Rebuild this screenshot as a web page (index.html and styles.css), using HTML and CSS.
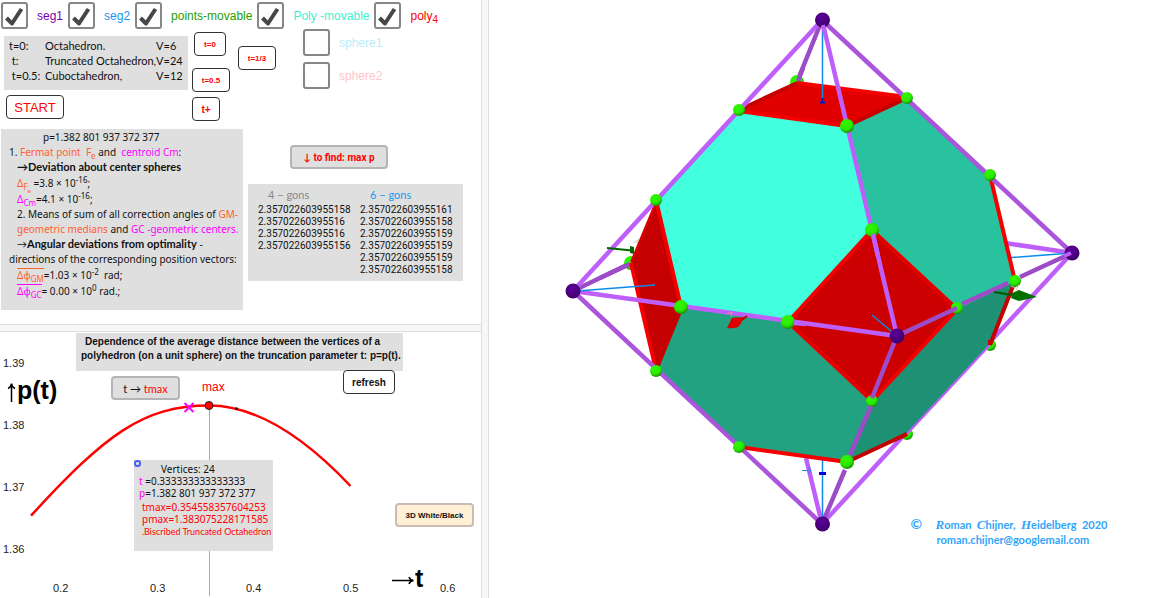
FILE: index.html
```html
<!DOCTYPE html>
<html lang="en">
<head>
<meta charset="utf-8">
<title>Truncated Octahedron</title>
<link rel="stylesheet" href="styles.css">
</head>
<body>
<main class="app">
  <div class="left">
    <section class="controls">
      <div class="toggles">
        <label class="toggle seg1"><input type="checkbox" checked>seg1</label>
        <label class="toggle seg2"><input type="checkbox" checked>seg2</label>
        <label class="toggle points"><input type="checkbox" checked>points-movable</label>
        <label class="toggle polym"><input type="checkbox" checked>Poly -movable</label>
        <label class="toggle poly4"><input type="checkbox" checked><span>poly<sub>4</sub></span></label>
      </div>
      <div class="setup">
        <div class="setup-main">
          <div class="legend">
            <span>t=0:</span><span>Octahedron.</span><span>V=6</span>
            <span>&nbsp;t:</span><span>Truncated Octahedron,</span><span>V=24</span>
            <span>&nbsp;t=0.5:</span><span>Cuboctahedron,</span><span>V=12</span>
          </div>
          <button class="btn start">START</button>
        </div>
        <div class="steps">
          <button class="btn small">t=0</button>
          <button class="btn small mid">t=0.5</button>
          <button class="btn small plus">t+</button>
        </div>
        <button class="btn small third">t=1/3</button>
        <div class="spheres">
          <label class="toggle sphere1"><input type="checkbox">sphere1</label>
          <label class="toggle sphere2"><input type="checkbox">sphere2</label>
        </div>
      </div>
      <div class="results">
        <div class="stats">
          <p class="center">p=1.382 801 937 372 377</p>
          <p>1. <span class="orange">Fermat point &nbsp;F<sub>e</sub></span> and &nbsp;<span class="pink">centroid Cm</span>:</p>
          <p class="in"><b>→Deviation about center spheres</b></p>
          <p class="in tall"><span class="orange">Δ<sub>F<small>e</small></sub></span> =3.8 × 10<sup>-16</sup>;</p>
          <p class="in tall"><span class="pink">Δ<sub>Cm</sub></span>=4.1 × 10<sup>-16</sup>;</p>
          <p class="in">2. Means of sum of all correction angles of <span class="orange">GM-</span></p>
          <p class="in"><span class="orange">geometric medians</span> and <span class="pink">GC -geometric centers.</span></p>
          <p class="in">→<b>Angular deviations from optimality</b> -</p>
          <p>directions of the corresponding position vectors:</p>
          <p class="in tall"><span class="orange over">Δφ<sub>GM</sub></span>=1.03 × 10<sup>-2</sup> &nbsp;rad;</p>
          <p class="in tall"><span class="pink over">Δφ<sub>GC</sub></span>= 0.00 × 10<sup>0</sup> rad.;</p>
        </div>
        <div class="gons-side">
          <button class="btn grey find">↓ to find: max p</button>
          <div class="gons-box">
            <table class="gons">
              <thead><tr><th class="four">4 − gons</th><th class="six">6 − gons</th></tr></thead>
              <tbody>
                <tr><td>2.357022603955158</td><td>2.357022603955161</td></tr>
                <tr><td>2.35702260395516</td><td>2.357022603955158</td></tr>
                <tr><td>2.35702260395516</td><td>2.357022603955159</td></tr>
                <tr><td>2.357022603955156</td><td>2.357022603955159</td></tr>
                <tr><td></td><td>2.357022603955159</td></tr>
                <tr><td></td><td>2.357022603955158</td></tr>
              </tbody>
            </table>
          </div>
        </div>
      </div>
    </section>
    <section class="graph">
      <svg class="plot" viewBox="0 332 481 266" preserveAspectRatio="xMinYMin meet">
        <g class="ticks">
          <text x="3" y="367">1.39</text><text x="3" y="429">1.38</text><text x="3" y="491">1.37</text><text x="3" y="553">1.36</text>
          <text x="53" y="592">0.2</text><text x="150" y="592">0.3</text><text x="246" y="592">0.4</text><text x="343" y="592">0.5</text><text x="440" y="592">0.6</text>
        </g>
        <path class="axis-arrow" d="M11.500 402V383.500M8 388.500q3-1 3.500-5q.5 4 3.500 5"/>
        <text class="axis" x="17" y="399">p(t)</text>
        <path class="axis-arrow" d="M392 580.500H413.500M409 577q1 3 4.500 3.500q-3.500.5-4.500 3.500"/>
        <text class="axis" x="415" y="587">t</text>
        <path d="M209.500 405V596" stroke="#aaa" stroke-width="1"/>
        <path class="curve" d="M31 515.700C105 435 143 405.500 209 405.500C258 405.500 308 441 350.500 486"/>
        <path d="M184.500 403l9 9m0-9l-9 9" stroke="#f0f" stroke-width="2"/>
        <circle cx="236.500" cy="408.500" r="1.300"/>
        <circle cx="209" cy="405.500" r="4" fill="red" stroke="#222"/>
        <text class="max" x="202" y="391">max</text>
      </svg>
      <div class="graph-title"><p class="lead">Dependence of the average distance between the vertices of a</p><p>polyhedron (on a unit sphere) on the truncation parameter t: p=p(t).</p></div>
      <button class="btn grey tmax">t → <span class="red">tmax</span></button>
      <button class="btn refresh">refresh</button>
      <div class="values">
        <p class="vert">Vertices: 24</p>
        <p><span class="pink">t</span> =0.333333333333333</p>
        <p><span class="pink">p</span>=1.382 801 937 372 377</p>
        <p class="red first">tmax=0.354558357604253</p>
        <p class="red">pmax=1.383075228171585</p>
        <p class="red note">.Biscribed Truncated Octahedron</p>
      </div>
      <button class="btn theme">3D White/Black</button>
    </section>
  </div>
  <div class="divider"></div>
  <section class="view3d">
    <svg class="solid" viewBox="489 0 669 598" preserveAspectRatio="xMinYMin meet">
      <g class="rod">
        <path d="M822 524L806 458"/><path d="M1072 253L1005 243"/>
        <path d="M1072 253L822 524"/>
        <path class="dim" d="M822 20L797 82M573 291L631 263"/>
      </g>
      <path d="M1072 253L1005 258M822.500 524V459" class="blue"/>
      <circle class="pt" cx="797" cy="82" r="7"/><circle class="pt" cx="631" cy="263" r="7"/>
      <circle class="pt" cx="990" cy="345" r="6"/><circle class="pt" cx="907" cy="434" r="6"/>
      <path class="rod dim" d="M600 278L630 264M803 68L798 81"/>
      <polygon fill="#42ffdd" points="739,110 847,125 872,230 788,322 681,307 656,200"/>
      <polygon fill="#29c29e" points="847,125 907,98 990,175 1015,281 957,309 872,230"/>
      <polygon fill="#22a281" points="681,307 788,322 872,401 847,462 739,447 656,370"/>
      <polygon fill="#1e9174" points="957,309 1015,281 990,345 907,434 847,462 872,401"/>
      <polygon fill="#e00000" points="797,82 907,98 847,125 739,110"/>
      <polygon fill="#c40000" points="656,200 681,307 656,370 631,263"/>
      <polygon fill="#c00" points="872,230 957,309 872,401 788,322"/>
      <path class="edge" d="M797 83L907 97M739 111L847 126M656 200L681 307M631 263L656 370M788 322L872 230L957 309L872 401ZM990 175L1015 281M739 447L847 462"/>
      <path class="edge dark" d="M739 110L797 83M847 126L907 98M681 309L656 370M1015 281L990 345M847 462L907 434"/>
      <path d="M656 202L631 262M788 322L872 401M872 230L957 309" stroke="#dc0000" stroke-width="2" fill="none"/>
      <path class="rod thin" d="M990 345L907 434"/>
      <path class="rod" d="M822 20L573 291M822 20L897 336M573 291L897 336"/>
      <path class="rod mid" d="M822 20L1072 253M573 291L822 524"/>
      <path class="blue" d="M822.500 25V103M577 291L655 285M897 336L872 315"/>
      <path d="M820 102.500h5M822.500 98v5" stroke="#0018c8" stroke-width="2"/>
      <path d="M819 473.500h7" stroke="#0000d8" stroke-width="3"/>
      <path d="M802 470.500h9M808 467l3 4l-3 3" stroke="#3a7cf0" fill="none"/>
      <path d="M607 248L632 250.500" stroke="#006a00" stroke-width="2"/><path d="M630 246l4 1v7l-4-1z" fill="#006a00"/>
      <path d="M634 243l5-4-2 4" stroke="#bca" fill="none"/>
      <path d="M732 318l12-1-4 8q-3 4-13 3z" fill="#d00"/><path d="M727 314l5-2-1 5" fill="none" stroke="#f88"/><path d="M742 320l5-4" stroke="#c00" stroke-width="2"/>
      <g class="pt">
        <circle cx="739" cy="110" r="6"/><circle cx="907" cy="98" r="6"/><circle cx="847" cy="126" r="7"/>
        <circle cx="656" cy="200" r="6"/><circle cx="681" cy="307" r="7"/><circle cx="656" cy="371" r="6"/>
        <circle cx="872" cy="230" r="7"/><circle cx="788" cy="322" r="7"/><circle cx="957" cy="308" r="6"/><circle cx="872" cy="401" r="6"/>
        <circle cx="990" cy="175" r="6"/><circle cx="1015" cy="281" r="6"/>
        <circle cx="739" cy="447" r="6"/><circle cx="847" cy="462" r="7"/>
      </g>
      <path class="rod dim" d="M1072 253L1020 277M1008 283L962 304M957 308L897 336L872 398M871 406L850 455"/>
      <path class="rod dim" d="M845 470L822 524"/>
      <path class="rod" d="M873 234L878 256M794 323L806 324"/>
      <path class="edge dark" d="M990 340v5M896 439L907 434"/>
      <path d="M994 292l18 3" stroke="#005a00" stroke-width="2"/><path d="M1012 293l7-3 18 7-18 4-8-3z" fill="#007000"/>
      <path d="M1011 286l4 2 4-3-3 5" stroke="#bca" fill="none"/>
      <g fill="url(#ball)">
        <circle cx="822.500" cy="20" r="7.500"/><circle cx="573" cy="291" r="7.500"/><circle cx="1072" cy="253" r="7.500"/><circle cx="897" cy="336" r="7.500"/><circle cx="822.500" cy="524" r="7.500"/>
      </g>
      <path class="rod tip" d="M823 25L825 34M1064 256L1071 253"/>
      <defs>
        <radialGradient id="ball" cx=".45" cy=".35" r=".65"><stop offset="0" stop-color="#6000a0"/><stop offset="1" stop-color="#3c0068"/></radialGradient>
        <radialGradient id="green" cx=".4" cy=".3" r=".7"><stop offset="0" stop-color="#30fa00"/><stop offset=".65" stop-color="#2ae800"/><stop offset="1" stop-color="#189000"/></radialGradient>
      </defs>
    </svg>
    <div class="credit">
      <p><span class="copy">©</span><i>R</i>oman &nbsp;<i>C</i>hijner, &nbsp;<i>H</i>eidelberg &nbsp;2020</p>
      <p class="mail">roman.chijner@googlemail.com</p>
    </div>
  </section>
</main>
</body>
</html>
```
FILE: styles.css
```css
*, *::before { box-sizing: border-box; }
body { margin: 0; background: #fff; color: #111; font-family: Lato, "Open Sans", sans-serif; font-size: 11px; }
p { margin: 0; }
.app { display: grid; grid-template-columns: minmax(0, 481fr) 8px minmax(0, 669fr); min-height: 100vh; overflow: hidden; }
.left { display: flex; flex-direction: column; min-width: 0; }
.divider { background: #f7f7f7; border: 1px solid #ddd; border-width: 0 1px; }

.controls { height: 325px; flex: none; border-bottom: 1px solid #ddd; }
.toggles { display: flex; gap: 5px; padding: 2px 0 0 1px; }
.toggle { display: flex; align-items: center; gap: 9px; font: 12px "Liberation Sans", Arial, sans-serif; white-space: nowrap; }
.toggle input { appearance: none; width: 27px; height: 27px; margin: 0; border: 2px solid #868686; border-radius: 3px; background: #fff; }
.toggle input:checked { background: #fff url("data:image/svg+xml,%3Csvg xmlns='http://www.w3.org/2000/svg' viewBox='0 0 23 23'%3E%3Cpath d='M3.500 14L9 19.500L18.500 5' fill='none' stroke='%23474747' stroke-width='4' stroke-linejoin='round'/%3E%3C/svg%3E") center / 23px 23px no-repeat; }
.toggle sub { font-size: 10px; line-height: 0; }
.seg1 { color: #7d00b0; }
.seg2 { color: #1898f0; }
.points { color: #2aa000; }
.polym { color: #42f0d0; }
.poly4 { color: #f00; }
.sphere1 { color: #b8ecfc; }
.sphere2 { color: #ffc4c8; }

.setup { display: flex; align-items: flex-start; height: 100px; padding-left: 4px; }
.setup-main { width: 184px; padding-top: 7px; }
.legend { display: grid; grid-template-columns: 36px 1fr 28px; height: 54px; padding: 2px 4px 0 5px; background: #dfdfdf; line-height: 15px; white-space: nowrap; align-content: start; }
.btn { height: 24px; margin: 0; padding: 0; border: 1px solid #333; border-radius: 4px; background: #fff; color: #f00; font: 13px "Liberation Sans", Arial, sans-serif; }
.start { display: block; width: 58px; margin: 5px 0 0 2px; }
.small { font-size: 8px; font-weight: bold; }
.steps { display: flex; flex-direction: column; align-items: flex-start; padding: 3px 0 0 4px; width: 50px; }
.steps .btn { width: 32px; margin-left: 2px; }
.steps .mid { width: 38px; margin: 12px 0 5px; }
.steps .plus { width: 28px; margin-left: 0; font-size: 10px; }
.third { width: 38px; margin-top: 17px; }
.spheres { display: flex; flex-direction: column; gap: 6px; padding-left: 27px; }

.results { display: flex; gap: 5px; padding-left: 1px; }
.stats { width: 242px; height: 181px; padding: 1px 0 0 8px; background: #dfdfdf; font: 10px "Noto Sans", Lato, sans-serif; line-height: 15px; white-space: nowrap; }
.stats .center { padding-left: 34px; }
.stats .in { padding-left: 8px; }
.stats b { font: bold 11px Lato, sans-serif; line-height: 0; }
.stats .tall { line-height: 16px; }
.stats sub, .stats sup { font-size: 8px; line-height: 0; }
.stats small { font-size: 6px; vertical-align: sub; }
.over { background: linear-gradient(currentColor, currentColor) top / 100% 1px no-repeat; }
.orange { color: #ff6030; }
.pink { color: #f0f; }
.red { color: #f00; }
.gons-side { display: flex; flex-direction: column; width: 215px; padding-top: 16px; }
.grey { border: 2px solid #b4b4b4; background: #dfdfdf; font: 11px Lato, sans-serif; }
.find { width: 98px; margin-left: 42px; font: bold 10px Roboto, Lato, sans-serif; }
.gons-box { height: 97px; margin-top: 15px; padding: 4px 0 0 10px; background: #dfdfdf; }
.gons { border-collapse: collapse; font: 10px Roboto, Lato, sans-serif; line-height: 12px; }
.gons td { padding: 0; width: 102px; height: 12px; }
.gons th { padding: 0 0 3px 10px; font: 11px Lato, sans-serif; line-height: 13px; text-align: left; }
.four { color: #888; }
.six { color: #1898f0; }

.graph { position: relative; flex: 1; margin-top: 6px; border-top: 1px solid #ddd; box-shadow: 0 -6px #f7f7f7; }
.plot { display: block; width: 100%; }
.ticks text { font: 11px "Liberation Sans", Arial, sans-serif; fill: #222; }
.axis { font: bold 25px "Liberation Sans", Arial, sans-serif; }
.axis-arrow { fill: none; stroke: #000; stroke-width: 1.500; }
.curve { fill: none; stroke: #f00; stroke-width: 2.500; }
.max { font: 12px "Liberation Sans", Arial, sans-serif; fill: #f00; }
.graph-title { position: absolute; left: 76px; top: 1px; width: 327px; height: 38px; padding: 2px 0 0 5px; background: #dfdfdf; font: bold 10px "Liberation Sans", Arial, sans-serif; line-height: 14px; white-space: nowrap; }
.graph-title .lead { padding-left: 4px; }
.tmax { position: absolute; left: 111px; top: 44px; width: 69px; color: #111; }
.refresh { position: absolute; left: 343px; top: 38px; width: 52px; color: #111; font-size: 10px; font-weight: bold; }
.values { position: absolute; left: 134px; top: 128px; width: 139px; height: 91px; padding: 3px 0 0 5px; background: #dfdfdf; font: 10px "Noto Sans", Lato, sans-serif; line-height: 12px; white-space: nowrap; }
.values::before { content: ""; position: absolute; left: 0; top: 0; width: 7px; height: 7px; border: 2px solid #5060ff; border-radius: 3px; }
.values .vert { padding-left: 22px; }
.values .red { padding-left: 3px; }
.values .first { padding-top: 2px; }
.values .note { font: 9px Lato, sans-serif; line-height: 14px; }
.theme { position: absolute; left: 395px; top: 171px; width: 79px; border: 2px solid #c8bcb4; background: #ffefd5; color: #111; font-size: 8px; font-weight: bold; }

.view3d { position: relative; min-width: 0; }
.solid { display: block; width: 100%; }
.rod { fill: none; stroke: #bf5ffb; stroke-width: 4.500; }
.mid.rod { stroke: #aa55dc; }
.dim { stroke: #9b4cc6; }
.thin { stroke-width: 2; }
.tip { stroke-width: 4; }
.edge { fill: none; stroke: #f40000; stroke-width: 4; }
.edge.dark { stroke: #c40000; }
.blue { fill: none; stroke: #0d8be8; stroke-width: 1.500; }
.pt { fill: url(#green); }
.credit { position: absolute; left: 63%; top: 517px; color: #30a5fb; font-size: 11px; font-weight: bold; line-height: 15px; white-space: nowrap; }
.credit i { font: italic bold 13px "Liberation Serif", serif; line-height: 0; }
.copy { display: inline-block; width: 25px; font-size: 14px; line-height: 0; }
.mail { padding-left: 26px; }
```
